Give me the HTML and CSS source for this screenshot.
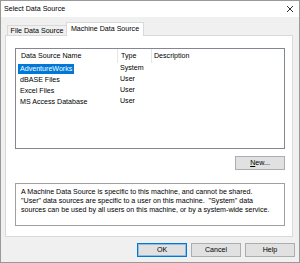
FILE: index.html
```html
<!DOCTYPE html>
<html>
<head>
<meta charset="utf-8">
<link rel="stylesheet" href="styles.css">
</head>
<body>
<div class="window">
  <div class="titlebar">
    <span class="title">Select Data Source</span>
    <svg class="close" width="8" height="8" viewBox="0 0 8 8"><path d="M1 1L7 7M7 1L1 7" stroke="#000" stroke-width="0.8" fill="none"/></svg>
  </div>
  <div class="content">
    <div class="tabs">
      <div class="tab tab-file">File Data Source</div>
      <div class="tab tab-machine">Machine Data Source</div>
    </div>
    <div class="panel">
      <div class="list">
        <div class="lv-head">
          <div class="hc hc1">Data Source Name</div>
          <div class="hc hc2">Type</div>
          <div class="hc hc3">Description</div>
        </div>
        <div class="lv-row">
          <div class="c1"><span class="sel">AdventureWorks</span></div>
          <div class="c2">System</div>
          <div class="c3"></div>
        </div>
        <div class="lv-row">
          <div class="c1"><span class="item">dBASE Files</span></div>
          <div class="c2">User</div>
          <div class="c3"></div>
        </div>
        <div class="lv-row">
          <div class="c1"><span class="item">Excel Files</span></div>
          <div class="c2">User</div>
          <div class="c3"></div>
        </div>
        <div class="lv-row">
          <div class="c1"><span class="item">MS Access Database</span></div>
          <div class="c2">User</div>
          <div class="c3"></div>
        </div>
      </div>
      <div class="new-row">
        <button class="btn"><u>N</u>ew...</button>
      </div>
      <div class="desc">A Machine Data Source is specific to this machine, and cannot be shared.<br>"User" data sources are specific to a user on this machine.&nbsp; "System" data<br>sources can be used by all users on this machine, or by a system-wide service.</div>
    </div>
    <div class="buttons">
      <button class="btn btn-default">OK</button>
      <button class="btn">Cancel</button>
      <button class="btn">Help</button>
    </div>
  </div>
</div>
</body>
</html>
```
FILE: styles.css
```css
* { box-sizing: border-box; }
html, body { margin: 0; padding: 0; }
body {
  font-family: "Liberation Sans", Arial, sans-serif;
  font-size: 7.1px;
  color: #000;
  background: #f0f0f0;
}
.window {
  width: 300px;
  height: 263px;
  border: 1px solid #999;
  background: #f0f0f0;
  display: flex;
  flex-direction: column;
}
.titlebar {
  height: 16px;
  background: #fff;
  display: flex;
  align-items: center;
  justify-content: space-between;
  padding: 0 5px 0 3px;
}
.title { line-height: 16px; }
.close { display: block; }
.content {
  padding: 5px 4px 0 4px;
  display: flex;
  flex-direction: column;
}
.tabs {
  display: flex;
  align-items: flex-end;
  height: 13px;
  padding-left: 2px;
  position: relative;
  z-index: 1;
}
.tab {
  border: 1px solid #d9d9d9;
  border-bottom: none;
  text-align: center;
  white-space: nowrap;
}
.tab-file {
  width: 59px;
  height: 10px;
  line-height: 10px;
  border-right: none;
  background: #f0f0f0;
}
.tab-machine {
  width: 78px;
  height: 14px;
  margin-bottom: -1px;
  line-height: 13px;
  background: #fff;
}
.panel {
  width: 288px;
  height: 202px;
  border: 1px solid #d9d9d9;
  background: #fff;
  padding: 12px 0 0 9px;
  display: flex;
  flex-direction: column;
}
.list {
  width: 270px;
  height: 101px;
  border: 1px solid #828790;
  display: flex;
  flex-direction: column;
}
.lv-head, .lv-row {
  display: grid;
  grid-template-columns: 102px 34px 1fr;
}
.lv-head { height: 14px; line-height: 14px; }
.hc { white-space: nowrap; }
.hc1 { padding-left: 5px; border-right: 1px solid #e5e5e5; }
.hc2 { padding-left: 3px; border-right: 1px solid #e5e5e5; }
.hc3 { padding-left: 2px; }
.lv-row { height: 11px; line-height: 11px; }
.c1 { padding-left: 2px; white-space: nowrap; }
.c2 { padding-left: 2px; }
.sel, .item {
  display: inline-block;
  padding: 0 2px;
  margin-top: 1px;
  height: 10px;
  line-height: 10px;
  vertical-align: top;
}
.sel { background: #0078d7; color: #fff; }
.new-row {
  width: 270px;
  display: flex;
  justify-content: flex-end;
  margin-top: 7px;
}
.btn {
  width: 50px;
  height: 14px;
  padding: 0;
  border: 1px solid #adadad;
  background: #e1e1e1;
  font: inherit;
  color: #000;
  line-height: 12px;
  text-align: center;
}
.btn-default {
  border-color: #0078d7;
  box-shadow: inset 0 0 0 1px rgba(0, 120, 215, 0.35);
}
.desc {
  width: 270px;
  height: 43px;
  margin-top: 13px;
  border: 1px solid #a0a0a0;
  padding: 4px 0 0 5px;
  line-height: 9px;
  white-space: nowrap;
}
.buttons {
  display: flex;
  justify-content: flex-end;
  gap: 4px;
  margin-top: 6px;
}
```
